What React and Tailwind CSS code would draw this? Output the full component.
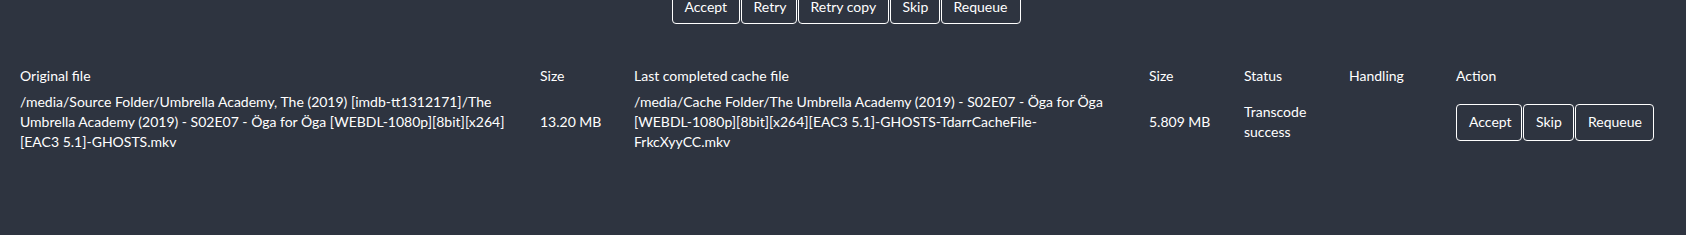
import React from "react";

const btn =
  "border border-white rounded-[4px] px-3 text-white text-[14px] leading-5 bg-transparent whitespace-nowrap";

export default function App() {
  return (
    <div
      className="w-[1686px] h-[235px] overflow-hidden bg-[#2e3440] text-white text-[14px] leading-5"
      style={{ fontFamily: "Lato, 'Noto Sans', sans-serif" }}
    >
      <div className="flex justify-center gap-px -mt-[11px] pl-[6px]">
        <button className={`${btn} h-[35px] w-[68px]`}>Accept</button>
        <button className={`${btn} h-[35px] w-[56px]`}>Retry</button>
        <button className={`${btn} h-[35px] w-[91px]`}>Retry copy</button>
        <button className={`${btn} h-[35px] w-[50px]`}>Skip</button>
        <button className={`${btn} h-[35px] w-[80px]`}>Requeue</button>
      </div>
      <table className="ml-[20px] mt-[42px] border-collapse text-left">
        <colgroup>
          <col className="w-[520px]" />
          <col className="w-[94px]" />
          <col className="w-[515px]" />
          <col className="w-[95px]" />
          <col className="w-[105px]" />
          <col className="w-[107px]" />
          <col className="w-[220px]" />
        </colgroup>
        <thead>
          <tr>
            <th className="font-normal pb-[6px] align-top">Original file</th>
            <th className="font-normal pb-[6px] align-top">Size</th>
            <th className="font-normal pb-[6px] align-top">Last completed cache file</th>
            <th className="font-normal pb-[6px] align-top">Size</th>
            <th className="font-normal pb-[6px] align-top">Status</th>
            <th className="font-normal pb-[6px] align-top">Handling</th>
            <th className="font-normal pb-[6px] align-top">Action</th>
          </tr>
        </thead>
        <tbody>
          <tr>
            <td className="align-middle pr-[18px]">
              /media/Source Folder/Umbrella Academy, The (2019) [imdb-tt1312171]/The
              Umbrella Academy (2019) - S02E07 - Öga for Öga [WEBDL-1080p][8bit][x264]
              [EAC3 5.1]-GHOSTS.mkv
            </td>
            <td className="align-middle">13.20 MB</td>
            <td className="align-middle pr-[18px]">
              /media/Cache Folder/The Umbrella Academy (2019) - S02E07 - Öga for Öga
              [WEBDL-1080p][8bit][x264][EAC3 5.1]-GHOSTS-TdarrCacheFile-FrkcXyyCC.mkv
            </td>
            <td className="align-middle">5.809 MB</td>
            <td className="align-middle pr-[20px]">Transcode success</td>
            <td className="align-middle"></td>
            <td className="align-middle">
              <div className="flex gap-px">
                <button className={`${btn} h-[37px] w-[66px]`}>Accept</button>
                <button className={`${btn} h-[37px] w-[51px]`}>Skip</button>
                <button className={`${btn} h-[37px] w-[79px]`}>Requeue</button>
              </div>
            </td>
          </tr>
        </tbody>
      </table>
    </div>
  );
}
